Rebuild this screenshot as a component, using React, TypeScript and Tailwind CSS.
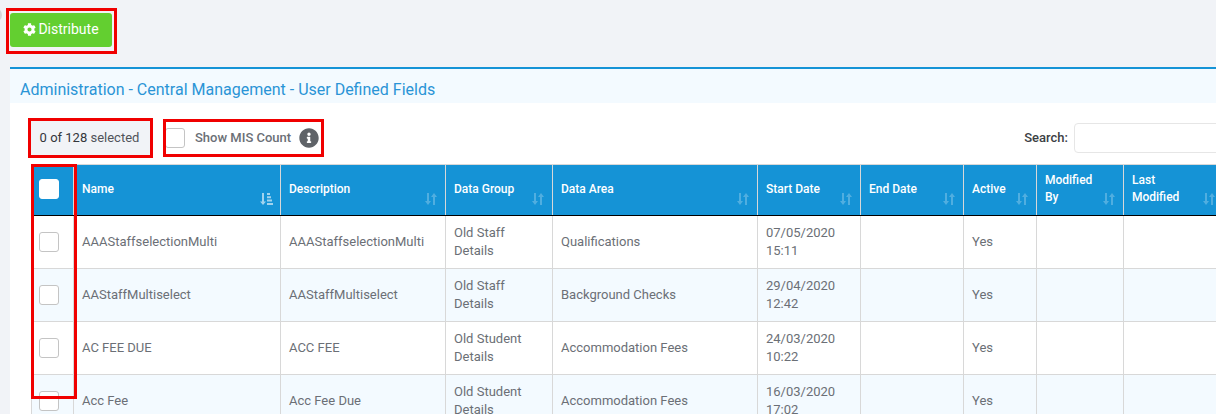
import { FaCog, FaInfoCircle } from "react-icons/fa";

const columns = [
  { label: "Name", width: "w-[207px]" },
  { label: "Description", width: "w-[165px]" },
  { label: "Data Group", width: "w-[107px]" },
  { label: "Data Area", width: "w-[205px]" },
  { label: "Start Date", width: "w-[103px]" },
  { label: "End Date", width: "w-[103px]" },
  { label: "Active", width: "w-[73px]" },
  { label: "Modified By", width: "w-[87px]" },
  { label: "Last Modified", width: "w-[100px]" },
];

const rows = [
  ["AAAStaffselectionMulti", "AAAStaffselectionMulti", "Old Staff Details", "Qualifications", "07/05/2020 15:11"],
  ["AAStaffMultiselect", "AAStaffMultiselect", "Old Staff Details", "Background Checks", "29/04/2020 12:42"],
  ["AC FEE DUE", "ACC FEE", "Old Student Details", "Accommodation Fees", "24/03/2020 10:22"],
  ["Acc Fee", "Acc Fee Due", "Old Student Details", "Accommodation Fees", "16/03/2020 17:02"],
];

const Box = ({ header = false }: { header?: boolean }) => (
  <span
    className={`block size-5 rounded-[3px] border bg-white ${
      header ? "border-white" : "border-[#c4c4c4]"
    }`}
  />
);

const SortIcon = ({ active = false }: { active?: boolean }) =>
  active ? (
    <svg viewBox="0 0 13 12" className="absolute right-[7px] bottom-[10px] h-3 w-[13px] fill-white opacity-60">
      <path d="M2 0h2v8.5h2L3 12 0 8.5h2z" />
      <path d="M7 0h3v2H7zM7 3.3h4v2H7zM7 6.6h5v2H7zM7 9.9h6V12H7z" />
    </svg>
  ) : (
    <svg viewBox="0 0 12 12" className="absolute right-2 bottom-[10px] size-3 fill-white opacity-25">
      <path d="M2 0h2v8h2l-3 4-3-4h2z" />
      <path d="M9 0l3 4h-2v8H8V4H6z" />
    </svg>
  );

export default function App() {
  return (
    <div className="relative h-[414px] w-[1216px] overflow-hidden bg-[#f1f3f7] pl-[10px] font-['Roboto',sans-serif] text-[13px] text-[#6b6f76]">
      <div className="pt-[13px]">
        <button className="flex h-[34px] w-[102px] items-center justify-center gap-[2px] rounded-[3px] bg-[#63cf30] pb-[2px] text-sm text-white">
          <FaCog className="size-[13px]" />
          Distribute
        </button>
      </div>

      <div className="mt-5 border-t-2 border-[#1593d6] bg-white">
        <h2 className="h-[34px] bg-[#f3faff] pl-[10px] text-base leading-[42px] text-[#2a94d6]">
          Administration - Central Management - User Defined Fields
        </h2>

        <div className="pl-[19px]">
          <div className="flex h-[61px] items-start pt-[16px]">
            <div className="flex h-[38px] w-[123px] items-center justify-center bg-[#f1f3f7] pr-[2px] text-[#50545a]">
              <span className="text-[#33363b]">0 of 128</span>&nbsp;selected
            </div>
            <label className="ml-[13px] flex h-[38px] items-center">
              <Box />
              <span className="ml-[10px] font-medium text-[#6b6f76]">Show MIS Count</span>
              <FaInfoCircle className="ml-2 size-5 text-[#5f6368]" />
            </label>
            <div className="-mr-3 ml-auto flex items-center pt-[4px]">
              <span className="mr-[6px] font-medium text-[#3c3f44]">Search:</span>
              <input className="h-[30px] w-[154px] rounded-[4px] border border-[#e6e6e6] bg-white" />
            </div>
          </div>

          <table className="ml-[2px] w-[1185px] table-fixed border-collapse">
            <thead>
              <tr className="h-[51px] bg-[#1593d6] text-xs text-white">
                <th className="w-[42px] border-x border-t border-b border-[#d8d8d8] border-b-black px-[7px] pb-[2px]">
                  <Box header />
                </th>
                {columns.map((col, i) => (
                  <th
                    key={col.label}
                    className={`${col.width} relative border-x border-t border-b border-[#d8d8d8] border-b-black px-2 pr-6 pb-[2px] text-left leading-[17px] font-medium`}
                  >
                    {col.label}
                    <SortIcon active={i === 0} />
                  </th>
                ))}
              </tr>
            </thead>
            <tbody>
              {rows.map((row, i) => (
                <tr key={row[0]} className={`h-[53px] ${i % 2 === 1 ? "bg-[#f3faff]" : "bg-white"}`}>
                  <td className="border border-[#d8d8d8] px-[7px]">
                    <Box />
                  </td>
                  {row.map((cell, j) => (
                    <td key={j} className="border border-[#d8d8d8] px-2 leading-[18px]">
                      {cell}
                    </td>
                  ))}
                  <td className="border border-[#d8d8d8]" />
                  <td className="border border-[#d8d8d8] px-2">Yes</td>
                  <td className="border border-[#d8d8d8]" />
                  <td className="border border-[#d8d8d8]" />
                </tr>
              ))}
            </tbody>
          </table>
        </div>
      </div>

      <div className="absolute top-2 -left-3 size-[14px] rounded-full bg-[#d4d6da]" />
      <div className="absolute top-2 left-[6px] h-[46px] w-[111px] border-[3px] border-[#f00000]" />
      <div className="absolute top-[118px] left-[28px] h-[40px] w-[125px] border-[3px] border-[#f00000]" />
      <div className="absolute top-[119px] left-[163px] h-[38px] w-[161px] border-[3px] border-[#f00000]" />
      <div className="absolute top-[164px] left-[31px] h-[235px] w-[46px] border-[3px] border-[#f00000]" />
    </div>
  );
}
